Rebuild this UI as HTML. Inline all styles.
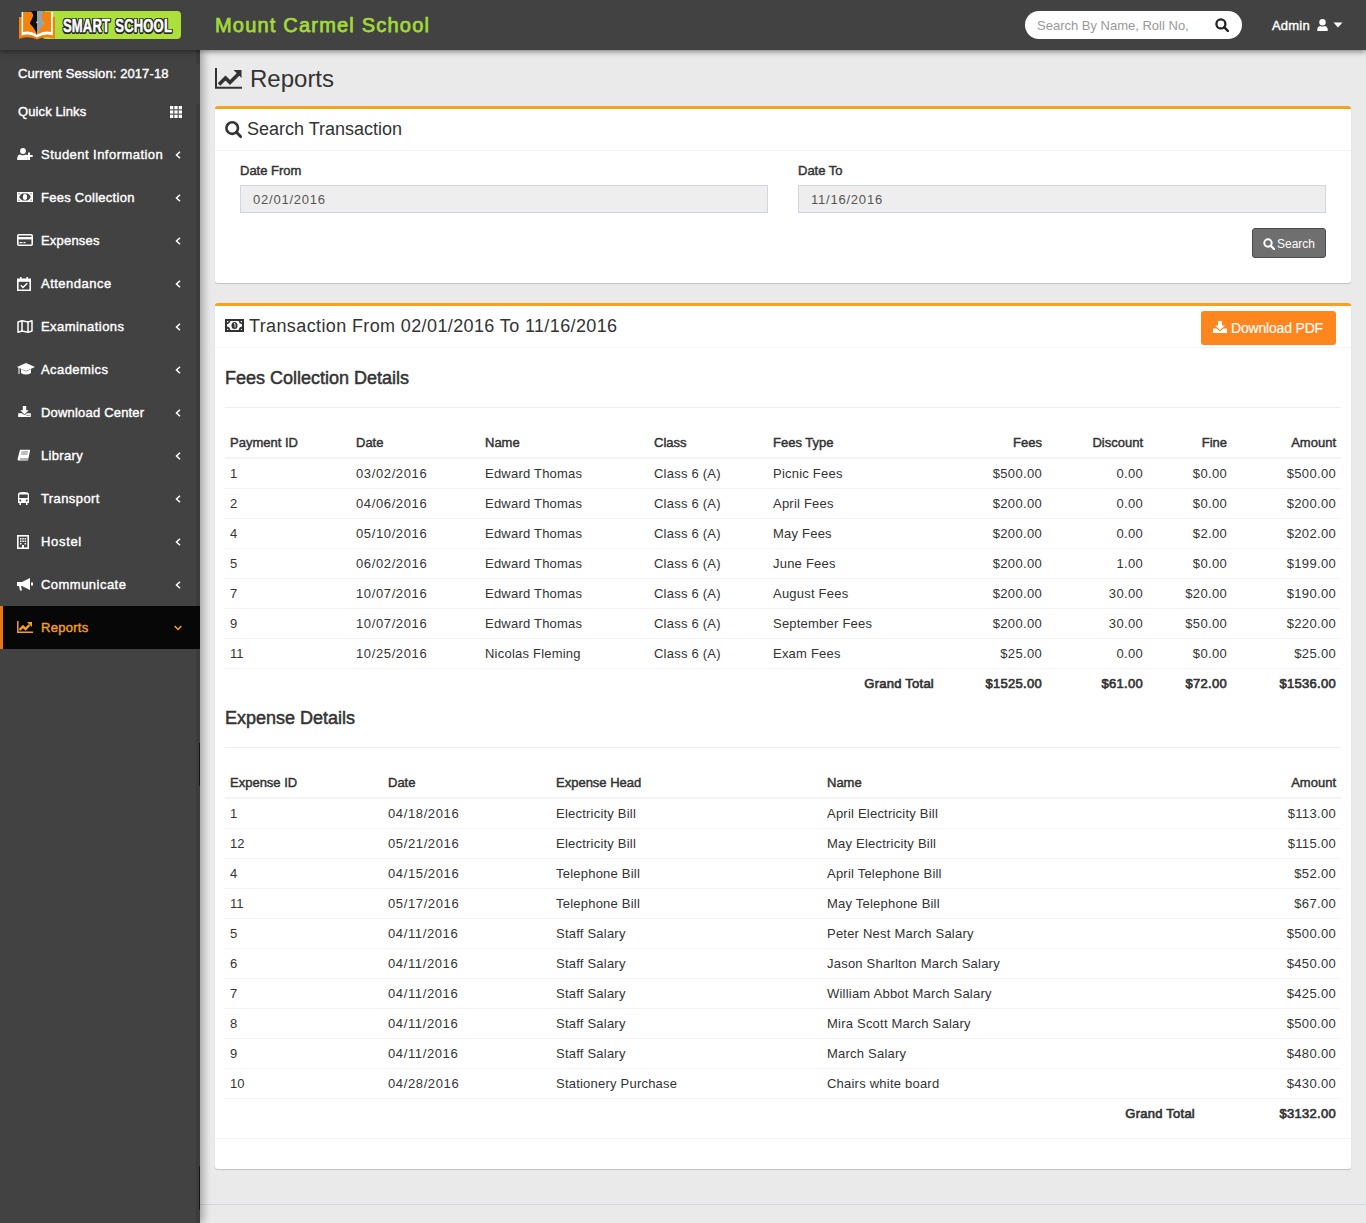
<!DOCTYPE html>
<html><head><meta charset="utf-8">
<style>
*{box-sizing:border-box;margin:0;padding:0}
html,body{width:1366px;height:1223px;overflow:hidden}
body{font-family:"Liberation Sans",sans-serif;background:#eaeaea;color:#333;position:relative}
.abs{position:absolute}
svg{display:block}
/* header */
#hdr{position:absolute;left:0;top:0;width:1366px;height:50px;background:#424242;z-index:5;box-shadow:0 1px 6px rgba(0,0,0,.55)}
#side{position:absolute;left:0;top:50px;width:200px;height:1173px;background:#424242;z-index:4;box-shadow:3px 0 8px rgba(0,0,0,.32)}
#content{position:absolute;left:200px;top:50px;width:1166px;height:1173px;background:#eaeaea}
.txt{position:absolute;white-space:nowrap;line-height:1}
.side-t{color:#fff;font-size:13px;-webkit-text-stroke-width:0.4px;letter-spacing:0.1px}
.mi{position:absolute;left:0;width:200px;height:43px}
.mi .ic{position:absolute;left:17px;top:15px}
.mi .lb{position:absolute;left:41px;top:15px;color:#fff;font-size:13px;letter-spacing:0.27px;-webkit-text-stroke-width:0.4px;line-height:1;white-space:nowrap}
.mi .chev{position:absolute;left:175px;top:18px}
.box{position:absolute;left:215px;width:1136px;background:#fff;border-top:3px solid #f9a11b;border-radius:3px;box-shadow:0 1px 1px rgba(0,0,0,.18)}
.row{position:absolute;left:225px;width:1116px;height:30px;border-bottom:1px solid #f4f4f4}
.row span{position:absolute;top:0;line-height:29px;font-size:13px;white-space:nowrap;color:#333}
.hrow span{font-weight:bold;font-size:12.5px}
.r{text-align:right}
.th{font-size:13px;-webkit-text-stroke-width:0.45px;color:#333;line-height:30px;height:30px;padding-top:1px}
.td{font-size:13px;color:#333;line-height:29px;height:29px}
</style></head><body>

<div id="hdr">
  <!-- logo -->
  <div class="abs" style="left:42px;top:11px;width:139px;height:28px;background:#ade03a;border-radius:4px"></div>
  <svg class="abs" style="left:19px;top:8px" width="37" height="33" viewBox="0 0 37 33">
    <path d="M0 9 H36 V30.7 Q27 27.3 18 31.5 Q9 27.3 0 30.7 Z" fill="#f47f0c"/>
    <path d="M2.6 4 H33.8 V27.6 Q26 24.6 18 29.6 Q10 24.6 2.6 27.6 Z" fill="#fff"/>
    <path d="M12 3 L18 3 L18 27 L10.5 15.5 Z" fill="#0d0d0d"/>
    <path d="M18 3 L24.5 3 L25.5 15.5 L18 27 Z" fill="#93a4ae"/>
    <circle cx="18" cy="14.3" r="0.9" fill="#ddd"/>
    <path d="M4.1 4 H12.7 Q14.6 6.5 13.8 9 Q12.3 12.5 10.5 15.4 Q15.5 19.5 18 26.4 Q11 22.2 4.1 24 Z" fill="#f5820b"/>
    <path d="M32 4 H24.1 Q22.2 6.5 22.8 9 Q23.8 12.5 25.5 15.4 Q21 19.5 18.4 26.4 Q25 22.2 32 24 Z" fill="#f5820b"/>
  </svg>
  <div class="txt" style="left:63px;top:17px;font-size:18px;font-weight:bold;color:#fff;letter-spacing:0.2px;word-spacing:2px;transform:scaleX(0.725);transform-origin:0 0;-webkit-text-stroke:0.5px #fff;text-shadow:1.5px 0px 0 #262626,-1.5px 0px 0 #262626,0px 1.5px 0 #262626,0px -1.5px 0 #262626,1px 1px 0 #262626,-1px -1px 0 #262626,1px -1px 0 #262626,-1px 1px 0 #262626,1.5px 0.8px 0 #262626,-1.5px 0.8px 0 #262626,1.5px -0.8px 0 #262626,-1.5px -0.8px 0 #262626,0.8px 1.5px 0 #262626,-0.8px 1.5px 0 #262626,0.8px -1.5px 0 #262626,-0.8px -1.5px 0 #262626">SMART SCHOOL</div>
  <div class="txt" style="left:215px;top:15px;font-size:20px;color:#a2d93a;letter-spacing:1.2px;-webkit-text-stroke:0.75px #a2d93a">Mount Carmel School</div>
  <!-- search -->
  <div class="abs" style="left:1025px;top:11px;width:217px;height:28px;background:#fff;border-radius:14px"></div>
  <div class="txt" style="left:1037px;top:19px;font-size:13px;color:#999">Search By Name, Roll No,</div>
  <svg class="abs" style="left:1215px;top:18px" width="14" height="14" viewBox="0 0 14 14"><circle cx="5.9" cy="5.9" r="4.5" fill="none" stroke="#222" stroke-width="2.3"/><path d="M9.2 9.2 L12.8 12.8" stroke="#222" stroke-width="2.4" stroke-linecap="round"/></svg>
  <div class="txt" style="left:1272px;top:19px;font-size:13px;-webkit-text-stroke-width:0.4px;letter-spacing:0.2px;color:#fff">Admin</div>
  <svg class="abs" style="left:1317px;top:19px" width="11" height="12" viewBox="0 0 11 12"><circle cx="5.5" cy="3.3" r="3.2" fill="#fff"/><path d="M0.3 12 L0.3 10 Q0.5 7.2 3 6.9 Q5.5 8.3 8 6.9 Q10.5 7.2 10.7 10 L10.7 12 Z" fill="#fff"/></svg>
  <svg class="abs" style="left:1333px;top:22px" width="10" height="6" viewBox="0 0 10 6"><path d="M0.5 0.5 L9.5 0.5 L5 5.5 Z" fill="#fff"/></svg>
</div>

<div id="side">
  <div class="abs" style="left:196px;top:0;width:4px;height:14px;background:#3b3b3b"></div>
  <div class="abs" style="left:196px;top:54px;width:4px;height:1119px;background:#3c3c3c"></div>
  <div class="txt side-t" style="left:18px;top:17px">Current Session: 2017-18</div>
  <div class="txt side-t" style="left:18px;top:55px">Quick Links</div>
  <svg class="abs" style="left:170px;top:56px" width="12" height="12" viewBox="0 0 12 12" fill="#fff"><rect x="0" y="0" width="3.3" height="3.3"/><rect x="4.35" y="0" width="3.3" height="3.3"/><rect x="8.7" y="0" width="3.3" height="3.3"/><rect x="0" y="4.35" width="3.3" height="3.3"/><rect x="4.35" y="4.35" width="3.3" height="3.3"/><rect x="8.7" y="4.35" width="3.3" height="3.3"/><rect x="0" y="8.7" width="3.3" height="3.3"/><rect x="4.35" y="8.7" width="3.3" height="3.3"/><rect x="8.7" y="8.7" width="3.3" height="3.3"/></svg>
  <div class="mi" style="top:83px"><div class="ic" style="top:15px"><svg width="17" height="13" viewBox="0 0 17 13" fill="#fff"><circle cx="6" cy="3" r="2.9"/><path d="M0.2 12 L0.2 10 Q0.5 6.8 3.3 6.4 Q6 8.2 8.7 6.4 Q10 6.6 10.8 7.5 L10.8 12 Z"/><path d="M11 4.5 h2 v2.6 h2.7 v2 h-2.7 v2.8 h-2 v-2.8 h-2.6 v-2 h2.6 z"/></svg></div><div class="lb" style="letter-spacing:0.46px">Student Information</div><svg class="chev" width="6" height="8" viewBox="0 0 6 8"><path d="M5 0.7 L1.5 4 L5 7.3" fill="none" stroke="#fff" stroke-width="1.5"/></svg></div>
  <div class="mi" style="top:126px"><div class="ic" style="top:16px"><svg width="16" height="10" viewBox="0 0 16 10"><rect x="0" y="0" width="16" height="10" fill="#fff"/><path d="M2.2 5 Q3.8 2 5.5 1.6 H10.5 Q12.2 2 13.8 5 Q12.2 8 10.5 8.4 H5.5 Q3.8 8 2.2 5 Z" fill="#424242"/><ellipse cx="8" cy="5" rx="2.2" ry="3" fill="#fff"/><circle cx="2" cy="1.8" r="0.6" fill="#424242"/><circle cx="14" cy="1.8" r="0.6" fill="#424242"/><circle cx="2" cy="8.2" r="0.6" fill="#424242"/><circle cx="14" cy="8.2" r="0.6" fill="#424242"/></svg></div><div class="lb" style="letter-spacing:0.27px">Fees Collection</div><svg class="chev" width="6" height="8" viewBox="0 0 6 8"><path d="M5 0.7 L1.5 4 L5 7.3" fill="none" stroke="#fff" stroke-width="1.5"/></svg></div>
  <div class="mi" style="top:169px"><div class="ic"><svg width="16" height="12" viewBox="0 0 16 12"><rect x="0.8" y="0.8" width="14.4" height="10.4" rx="1" fill="none" stroke="#fff" stroke-width="1.6"/><rect x="0.8" y="3" width="14.4" height="2.4" fill="#fff"/><rect x="2.5" y="8" width="3" height="1.2" fill="#fff"/><rect x="6.5" y="8" width="2" height="1.2" fill="#fff"/></svg></div><div class="lb" style="letter-spacing:0.2px">Expenses</div><svg class="chev" width="6" height="8" viewBox="0 0 6 8"><path d="M5 0.7 L1.5 4 L5 7.3" fill="none" stroke="#fff" stroke-width="1.5"/></svg></div>
  <div class="mi" style="top:212px"><div class="ic"><svg width="14" height="14" viewBox="0 0 14 14"><rect x="0.8" y="2.3" width="12.4" height="11" fill="none" stroke="#fff" stroke-width="1.6"/><rect x="0.8" y="2.3" width="12.4" height="2.5" fill="#fff"/><rect x="3" y="0" width="1.6" height="3" fill="#fff"/><rect x="9.4" y="0" width="1.6" height="3" fill="#fff"/><path d="M3.8 8.3 L6 10.5 L10.3 6.2" fill="none" stroke="#fff" stroke-width="1.4"/></svg></div><div class="lb" style="letter-spacing:0.49px">Attendance</div><svg class="chev" width="6" height="8" viewBox="0 0 6 8"><path d="M5 0.7 L1.5 4 L5 7.3" fill="none" stroke="#fff" stroke-width="1.5"/></svg></div>
  <div class="mi" style="top:255px"><div class="ic"><svg width="16" height="13" viewBox="0 0 16 13"><path d="M1 2 L5 0.8 L11 2 L15 0.8 L15 11 L11 12.2 L5 11 L1 12.2 Z" fill="none" stroke="#fff" stroke-width="1.5" stroke-linejoin="round"/><path d="M5 0.8 V11 M11 2 V12.2" stroke="#fff" stroke-width="1.5"/></svg></div><div class="lb" style="letter-spacing:0.45px">Examinations</div><svg class="chev" width="6" height="8" viewBox="0 0 6 8"><path d="M5 0.7 L1.5 4 L5 7.3" fill="none" stroke="#fff" stroke-width="1.5"/></svg></div>
  <div class="mi" style="top:298px"><div class="ic"><svg width="18" height="12" viewBox="0 0 18 12" fill="#fff"><path d="M0 4 L9 0 L18 4 L9 8 Z"/><path d="M4 6 L4 10 Q9 13 14 10 L14 6 L9 8.5 Z"/><rect x="1.5" y="4" width="1" height="7"/></svg></div><div class="lb" style="letter-spacing:0.43px">Academics</div><svg class="chev" width="6" height="8" viewBox="0 0 6 8"><path d="M5 0.7 L1.5 4 L5 7.3" fill="none" stroke="#fff" stroke-width="1.5"/></svg></div>
  <div class="mi" style="top:341px"><div class="ic"><svg width="13" height="11" viewBox="0 0 15 13" fill="#fff" style="margin-left:0.5px"><path d="M5.5 0 h4 v5 h3 L7.5 10 L2.5 5 h3 z"/><path d="M0 8.5 h4.5 l3 2.5 l3 -2.5 h4.5 v4.5 h-15 z"/><rect x="10" y="10.5" width="1.2" height="1.2" fill="#424242"/><rect x="12.2" y="10.5" width="1.2" height="1.2" fill="#424242"/></svg></div><div class="lb" style="letter-spacing:0.19px">Download Center</div><svg class="chev" width="6" height="8" viewBox="0 0 6 8"><path d="M5 0.7 L1.5 4 L5 7.3" fill="none" stroke="#fff" stroke-width="1.5"/></svg></div>
  <div class="mi" style="top:384px"><div class="ic"><svg width="14" height="13" viewBox="0 0 14 13"><path d="M3 0.8 L13.2 0.8 L11 11.5 L1.2 11.5 Q0.2 11 0.8 9 Z" fill="#fff"/><path d="M3 10 L12 10" stroke="#424242" stroke-width="0.8"/><path d="M4.5 3 L11 3 M4 5 L10.5 5" stroke="#424242" stroke-width="0.7"/></svg></div><div class="lb" style="letter-spacing:0.33px">Library</div><svg class="chev" width="6" height="8" viewBox="0 0 6 8"><path d="M5 0.7 L1.5 4 L5 7.3" fill="none" stroke="#fff" stroke-width="1.5"/></svg></div>
  <div class="mi" style="top:427px"><div class="ic"><svg width="13" height="13" viewBox="0 0 13 13" fill="#fff"><path d="M1 2 Q1 0 6.5 0 Q12 0 12 2 L12 11 L10.5 11 L10.5 13 L9 13 L9 11 L4 11 L4 13 L2.5 13 L2.5 11 L1 11 Z"/><rect x="2.3" y="2.5" width="8.4" height="3.5" fill="#424242"/><circle cx="3.3" cy="8.5" r="1" fill="#424242"/><circle cx="9.7" cy="8.5" r="1" fill="#424242"/></svg></div><div class="lb" style="letter-spacing:0.4px">Transport</div><svg class="chev" width="6" height="8" viewBox="0 0 6 8"><path d="M5 0.7 L1.5 4 L5 7.3" fill="none" stroke="#fff" stroke-width="1.5"/></svg></div>
  <div class="mi" style="top:470px"><div class="ic"><svg width="12" height="14" viewBox="0 0 12 14"><rect x="0.8" y="0.8" width="10.4" height="12.4" fill="none" stroke="#fff" stroke-width="1.6"/><path d="M3 3h1.5v1.5H3zM5.3 3h1.5v1.5H5.3zM7.6 3h1.5v1.5H7.6zM3 5.5h1.5V7H3zM5.3 5.5h1.5V7H5.3zM7.6 5.5h1.5V7H7.6zM3 8h1.5v1.5H3zM7.6 8h1.5v1.5H7.6zM5 10h2v3H5z" fill="#fff"/></svg></div><div class="lb" style="letter-spacing:0.67px">Hostel</div><svg class="chev" width="6" height="8" viewBox="0 0 6 8"><path d="M5 0.7 L1.5 4 L5 7.3" fill="none" stroke="#fff" stroke-width="1.5"/></svg></div>
  <div class="mi" style="top:513px"><div class="ic"><svg width="16" height="13" viewBox="0 0 16 13" fill="#fff"><path d="M0 4 L5 4 L13 0 L13 12 L5 8 L0 8 Z"/><path d="M2 8 L4 8 L5 12.5 L3 12.5 Z"/><rect x="14" y="4.5" width="2" height="3"/></svg></div><div class="lb" style="letter-spacing:0.47px">Communicate</div><svg class="chev" width="6" height="8" viewBox="0 0 6 8"><path d="M5 0.7 L1.5 4 L5 7.3" fill="none" stroke="#fff" stroke-width="1.5"/></svg></div>
  <div class="mi" style="top:556px;background:#070707;border-left:3px solid #e8780f"><div class="ic" style="left:14px;top:15px"><svg width="16" height="12" viewBox="0 0 16 12"><path d="M0.8 0 V11.2 H16" fill="none" stroke="#f5a020" stroke-width="1.5"/><path d="M2.5 9 L6 5.5 L8.5 8 L12.5 4" fill="none" stroke="#f5a020" stroke-width="2.4"/><path d="M10 1 L15 1 L15 6 Z" fill="#f5a020"/></svg></div><div class="lb" style="left:38px;color:#f5a020">Reports</div><svg class="chev" style="left:171px;top:19px" width="8" height="6" viewBox="0 0 8 6"><path d="M0.7 1 L4 4.5 L7.3 1" fill="none" stroke="#f5a020" stroke-width="1.5"/></svg></div>
</div>

<div class="abs" style="left:199px;top:743px;width:1px;height:43px;background:#151515;z-index:6"></div>
<div class="abs" style="left:199px;top:1166px;width:1px;height:44px;background:#151515;z-index:6"></div>
<div id="content">
</div>

<svg class="abs" style="left:215px;top:68px" width="28" height="21" viewBox="0 0 28 21"><path d="M1 0 V19.8 H27" fill="none" stroke="#333" stroke-width="2"/><path d="M4 16.5 L10.5 10 L15 14.5 L23.5 6" fill="none" stroke="#333" stroke-width="3.6"/><path d="M18.5 2 L26.5 2 L26.5 10 Z" fill="#333"/></svg>
<div class="txt" style="left:250px;top:67px;font-size:24px;color:#333">Reports</div>
<div class="box" style="top:106px;height:177px"></div>
<div class="abs" style="left:215px;top:150px;width:1136px;height:1px;background:#f4f4f4"></div>
<svg class="abs" style="left:224px;top:120px" width="19" height="19" viewBox="0 0 19 19"><circle cx="8.2" cy="8.1" r="5.8" fill="none" stroke="#333" stroke-width="2.6"/><path d="M12.4 12.3 L16.6 16.6" stroke="#333" stroke-width="2.9" stroke-linecap="round"/></svg>
<div class="txt" style="left:247px;top:120px;font-size:18px;color:#333">Search Transaction</div>
<div class="txt" style="left:240px;top:164px;font-size:13px;-webkit-text-stroke-width:0.45px;color:#333">Date From</div>
<div class="txt" style="left:798px;top:164px;font-size:13px;-webkit-text-stroke-width:0.45px;color:#333">Date To</div>
<div class="abs" style="left:240px;top:185px;width:528px;height:28px;background:#eee;border:1px solid #d2d6de"></div>
<div class="abs" style="left:798px;top:185px;width:528px;height:28px;background:#eee;border:1px solid #d2d6de"></div>
<div class="txt" style="left:253px;top:193px;font-size:13px;color:#555;letter-spacing:0.78px">02/01/2016</div>
<div class="txt" style="left:811px;top:193px;font-size:13px;color:#555;letter-spacing:0.78px">11/16/2016</div>
<div class="abs" style="left:1252px;top:228px;width:74px;height:30px;background:#6f6f6f;border:1px solid #4a4a4a;border-radius:3px"></div>
<svg class="abs" style="left:1263px;top:238px" width="12" height="12" viewBox="0 0 12 12"><circle cx="5" cy="5" r="3.7" fill="none" stroke="#fff" stroke-width="2"/><path d="M7.6 7.6 L11 11" stroke="#fff" stroke-width="2.2" stroke-linecap="round"/></svg>
<div class="txt" style="left:1277px;top:238px;font-size:12px;color:#fff">Search</div>
<div class="box" style="top:303px;height:866px"></div>
<div class="abs" style="left:215px;top:347px;width:1136px;height:1px;background:#f4f4f4"></div>
<svg class="abs" style="left:225px;top:319px" width="19" height="13" viewBox="0 0 19 13"><rect x="1" y="1" width="17" height="11" fill="none" stroke="#333" stroke-width="2"/><path d="M1 4.5 Q4.5 4.5 4.5 1 M14.5 1 Q14.5 4.5 18 4.5 M1 8.5 Q4.5 8.5 4.5 12 M14.5 12 Q14.5 8.5 18 8.5" stroke="#333" stroke-width="1.8" fill="none"/><ellipse cx="9.5" cy="6.5" rx="3" ry="3.6" fill="#333"/><path d="M9 4.8 L10 4.5 L10 8.5" stroke="#fff" stroke-width="0.9" fill="none"/></svg>
<div class="txt" style="left:249px;top:317px;font-size:18px;color:#333;letter-spacing:0.38px">Transaction From 02/01/2016 To 11/16/2016</div>
<div class="abs" style="left:1201px;top:311px;width:135px;height:34px;background:#ff851e;border-radius:3px"></div>
<svg class="abs" style="left:1213px;top:321px" width="14" height="12" viewBox="0 0 14 12" fill="#fff"><path d="M5 0 h4 v4.5 h3 L7 9 L2 4.5 h3 z"/><path d="M0 7.5 h3.5 l3.5 3 l3.5 -3 h3.5 v4.5 h-14 z"/></svg>
<div class="txt" style="left:1231px;top:321px;font-size:14px;letter-spacing:-0.18px;color:#fff;-webkit-text-stroke-width:0.15px">Download PDF</div>
<div class="txt" style="left:225px;top:369px;font-size:18px;-webkit-text-stroke-width:0.5px;color:#333">Fees Collection Details</div>
<div class="abs" style="left:225px;top:407px;width:1116px;height:1px;background:#eee"></div>
<div class="abs" style="left:225px;top:457px;width:1116px;height:2px;background:#f4f4f4"></div>
<div class="txt th" style="left:230px;top:427px">Payment ID</div>
<div class="txt th" style="left:356px;top:427px">Date</div>
<div class="txt th" style="left:485px;top:427px">Name</div>
<div class="txt th" style="left:654px;top:427px">Class</div>
<div class="txt th" style="left:773px;top:427px">Fees Type</div>
<div class="txt th r" style="left:842px;width:200px;top:427px">Fees</div>
<div class="txt th r" style="left:943px;width:200px;top:427px">Discount</div>
<div class="txt th r" style="left:1027px;width:200px;top:427px">Fine</div>
<div class="txt th r" style="left:1136px;width:200px;top:427px">Amount</div>
<div class="txt td" style="left:230px;top:459px">1</div>
<div class="txt td" style="left:356px;top:459px;letter-spacing:0.62px">03/02/2016</div>
<div class="txt td" style="left:485px;top:459px;letter-spacing:0.22px">Edward Thomas</div>
<div class="txt td" style="left:654px;top:459px;letter-spacing:0.22px">Class 6 (A)</div>
<div class="txt td" style="left:773px;top:459px;letter-spacing:0.22px">Picnic Fees</div>
<div class="txt td r" style="left:842px;width:200px;top:459px;letter-spacing:0.32px">$500.00</div>
<div class="txt td r" style="left:943px;width:200px;top:459px;letter-spacing:0.32px">0.00</div>
<div class="txt td r" style="left:1027px;width:200px;top:459px;letter-spacing:0.32px">$0.00</div>
<div class="txt td r" style="left:1136px;width:200px;top:459px;letter-spacing:0.32px">$500.00</div>
<div class="abs" style="left:225px;top:488px;width:1116px;height:1px;background:#f4f4f4"></div>
<div class="txt td" style="left:230px;top:489px">2</div>
<div class="txt td" style="left:356px;top:489px;letter-spacing:0.62px">04/06/2016</div>
<div class="txt td" style="left:485px;top:489px;letter-spacing:0.22px">Edward Thomas</div>
<div class="txt td" style="left:654px;top:489px;letter-spacing:0.22px">Class 6 (A)</div>
<div class="txt td" style="left:773px;top:489px;letter-spacing:0.22px">April Fees</div>
<div class="txt td r" style="left:842px;width:200px;top:489px;letter-spacing:0.32px">$200.00</div>
<div class="txt td r" style="left:943px;width:200px;top:489px;letter-spacing:0.32px">0.00</div>
<div class="txt td r" style="left:1027px;width:200px;top:489px;letter-spacing:0.32px">$0.00</div>
<div class="txt td r" style="left:1136px;width:200px;top:489px;letter-spacing:0.32px">$200.00</div>
<div class="abs" style="left:225px;top:518px;width:1116px;height:1px;background:#f4f4f4"></div>
<div class="txt td" style="left:230px;top:519px">4</div>
<div class="txt td" style="left:356px;top:519px;letter-spacing:0.62px">05/10/2016</div>
<div class="txt td" style="left:485px;top:519px;letter-spacing:0.22px">Edward Thomas</div>
<div class="txt td" style="left:654px;top:519px;letter-spacing:0.22px">Class 6 (A)</div>
<div class="txt td" style="left:773px;top:519px;letter-spacing:0.22px">May Fees</div>
<div class="txt td r" style="left:842px;width:200px;top:519px;letter-spacing:0.32px">$200.00</div>
<div class="txt td r" style="left:943px;width:200px;top:519px;letter-spacing:0.32px">0.00</div>
<div class="txt td r" style="left:1027px;width:200px;top:519px;letter-spacing:0.32px">$2.00</div>
<div class="txt td r" style="left:1136px;width:200px;top:519px;letter-spacing:0.32px">$202.00</div>
<div class="abs" style="left:225px;top:548px;width:1116px;height:1px;background:#f4f4f4"></div>
<div class="txt td" style="left:230px;top:549px">5</div>
<div class="txt td" style="left:356px;top:549px;letter-spacing:0.62px">06/02/2016</div>
<div class="txt td" style="left:485px;top:549px;letter-spacing:0.22px">Edward Thomas</div>
<div class="txt td" style="left:654px;top:549px;letter-spacing:0.22px">Class 6 (A)</div>
<div class="txt td" style="left:773px;top:549px;letter-spacing:0.22px">June Fees</div>
<div class="txt td r" style="left:842px;width:200px;top:549px;letter-spacing:0.32px">$200.00</div>
<div class="txt td r" style="left:943px;width:200px;top:549px;letter-spacing:0.32px">1.00</div>
<div class="txt td r" style="left:1027px;width:200px;top:549px;letter-spacing:0.32px">$0.00</div>
<div class="txt td r" style="left:1136px;width:200px;top:549px;letter-spacing:0.32px">$199.00</div>
<div class="abs" style="left:225px;top:578px;width:1116px;height:1px;background:#f4f4f4"></div>
<div class="txt td" style="left:230px;top:579px">7</div>
<div class="txt td" style="left:356px;top:579px;letter-spacing:0.62px">10/07/2016</div>
<div class="txt td" style="left:485px;top:579px;letter-spacing:0.22px">Edward Thomas</div>
<div class="txt td" style="left:654px;top:579px;letter-spacing:0.22px">Class 6 (A)</div>
<div class="txt td" style="left:773px;top:579px;letter-spacing:0.22px">August Fees</div>
<div class="txt td r" style="left:842px;width:200px;top:579px;letter-spacing:0.32px">$200.00</div>
<div class="txt td r" style="left:943px;width:200px;top:579px;letter-spacing:0.32px">30.00</div>
<div class="txt td r" style="left:1027px;width:200px;top:579px;letter-spacing:0.32px">$20.00</div>
<div class="txt td r" style="left:1136px;width:200px;top:579px;letter-spacing:0.32px">$190.00</div>
<div class="abs" style="left:225px;top:608px;width:1116px;height:1px;background:#f4f4f4"></div>
<div class="txt td" style="left:230px;top:609px">9</div>
<div class="txt td" style="left:356px;top:609px;letter-spacing:0.62px">10/07/2016</div>
<div class="txt td" style="left:485px;top:609px;letter-spacing:0.22px">Edward Thomas</div>
<div class="txt td" style="left:654px;top:609px;letter-spacing:0.22px">Class 6 (A)</div>
<div class="txt td" style="left:773px;top:609px;letter-spacing:0.22px">September Fees</div>
<div class="txt td r" style="left:842px;width:200px;top:609px;letter-spacing:0.32px">$200.00</div>
<div class="txt td r" style="left:943px;width:200px;top:609px;letter-spacing:0.32px">30.00</div>
<div class="txt td r" style="left:1027px;width:200px;top:609px;letter-spacing:0.32px">$50.00</div>
<div class="txt td r" style="left:1136px;width:200px;top:609px;letter-spacing:0.32px">$220.00</div>
<div class="abs" style="left:225px;top:638px;width:1116px;height:1px;background:#f4f4f4"></div>
<div class="txt td" style="left:230px;top:639px">11</div>
<div class="txt td" style="left:356px;top:639px;letter-spacing:0.62px">10/25/2016</div>
<div class="txt td" style="left:485px;top:639px;letter-spacing:0.22px">Nicolas Fleming</div>
<div class="txt td" style="left:654px;top:639px;letter-spacing:0.22px">Class 6 (A)</div>
<div class="txt td" style="left:773px;top:639px;letter-spacing:0.22px">Exam Fees</div>
<div class="txt td r" style="left:842px;width:200px;top:639px;letter-spacing:0.32px">$25.00</div>
<div class="txt td r" style="left:943px;width:200px;top:639px;letter-spacing:0.32px">0.00</div>
<div class="txt td r" style="left:1027px;width:200px;top:639px;letter-spacing:0.32px">$0.00</div>
<div class="txt td r" style="left:1136px;width:200px;top:639px;letter-spacing:0.32px">$25.00</div>
<div class="abs" style="left:225px;top:668px;width:1116px;height:1px;background:#f4f4f4"></div>
<div class="txt th r" style="left:734px;width:200px;top:668px;letter-spacing:0.25px;-webkit-text-stroke-width:0.65px">Grand Total</div>
<div class="txt th r" style="left:842px;width:200px;top:668px;letter-spacing:0.3px;-webkit-text-stroke-width:0.65px">$1525.00</div>
<div class="txt th r" style="left:943px;width:200px;top:668px;letter-spacing:0.3px;-webkit-text-stroke-width:0.65px">$61.00</div>
<div class="txt th r" style="left:1027px;width:200px;top:668px;letter-spacing:0.3px;-webkit-text-stroke-width:0.65px">$72.00</div>
<div class="txt th r" style="left:1136px;width:200px;top:668px;letter-spacing:0.3px;-webkit-text-stroke-width:0.65px">$1536.00</div>
<div class="txt" style="left:225px;top:709px;font-size:18px;-webkit-text-stroke-width:0.5px;color:#333">Expense Details</div>
<div class="abs" style="left:225px;top:747px;width:1116px;height:1px;background:#eee"></div>
<div class="abs" style="left:225px;top:797px;width:1116px;height:2px;background:#f4f4f4"></div>
<div class="txt th" style="left:230px;top:767px">Expense ID</div>
<div class="txt th" style="left:388px;top:767px">Date</div>
<div class="txt th" style="left:556px;top:767px">Expense Head</div>
<div class="txt th" style="left:827px;top:767px">Name</div>
<div class="txt th r" style="left:1136px;width:200px;top:767px">Amount</div>
<div class="txt td" style="left:230px;top:799px">1</div>
<div class="txt td" style="left:388px;top:799px;letter-spacing:0.62px">04/18/2016</div>
<div class="txt td" style="left:556px;top:799px;letter-spacing:0.22px">Electricity Bill</div>
<div class="txt td" style="left:827px;top:799px;letter-spacing:0.22px">April Electricity Bill</div>
<div class="txt td r" style="left:1136px;width:200px;top:799px;letter-spacing:0.32px">$113.00</div>
<div class="abs" style="left:225px;top:828px;width:1116px;height:1px;background:#f4f4f4"></div>
<div class="txt td" style="left:230px;top:829px">12</div>
<div class="txt td" style="left:388px;top:829px;letter-spacing:0.62px">05/21/2016</div>
<div class="txt td" style="left:556px;top:829px;letter-spacing:0.22px">Electricity Bill</div>
<div class="txt td" style="left:827px;top:829px;letter-spacing:0.22px">May Electricity Bill</div>
<div class="txt td r" style="left:1136px;width:200px;top:829px;letter-spacing:0.32px">$115.00</div>
<div class="abs" style="left:225px;top:858px;width:1116px;height:1px;background:#f4f4f4"></div>
<div class="txt td" style="left:230px;top:859px">4</div>
<div class="txt td" style="left:388px;top:859px;letter-spacing:0.62px">04/15/2016</div>
<div class="txt td" style="left:556px;top:859px;letter-spacing:0.22px">Telephone Bill</div>
<div class="txt td" style="left:827px;top:859px;letter-spacing:0.22px">April Telephone Bill</div>
<div class="txt td r" style="left:1136px;width:200px;top:859px;letter-spacing:0.32px">$52.00</div>
<div class="abs" style="left:225px;top:888px;width:1116px;height:1px;background:#f4f4f4"></div>
<div class="txt td" style="left:230px;top:889px">11</div>
<div class="txt td" style="left:388px;top:889px;letter-spacing:0.62px">05/17/2016</div>
<div class="txt td" style="left:556px;top:889px;letter-spacing:0.22px">Telephone Bill</div>
<div class="txt td" style="left:827px;top:889px;letter-spacing:0.22px">May Telephone Bill</div>
<div class="txt td r" style="left:1136px;width:200px;top:889px;letter-spacing:0.32px">$67.00</div>
<div class="abs" style="left:225px;top:918px;width:1116px;height:1px;background:#f4f4f4"></div>
<div class="txt td" style="left:230px;top:919px">5</div>
<div class="txt td" style="left:388px;top:919px;letter-spacing:0.62px">04/11/2016</div>
<div class="txt td" style="left:556px;top:919px;letter-spacing:0.22px">Staff Salary</div>
<div class="txt td" style="left:827px;top:919px;letter-spacing:0.22px">Peter Nest March Salary</div>
<div class="txt td r" style="left:1136px;width:200px;top:919px;letter-spacing:0.32px">$500.00</div>
<div class="abs" style="left:225px;top:948px;width:1116px;height:1px;background:#f4f4f4"></div>
<div class="txt td" style="left:230px;top:949px">6</div>
<div class="txt td" style="left:388px;top:949px;letter-spacing:0.62px">04/11/2016</div>
<div class="txt td" style="left:556px;top:949px;letter-spacing:0.22px">Staff Salary</div>
<div class="txt td" style="left:827px;top:949px;letter-spacing:0.22px">Jason Sharlton March Salary</div>
<div class="txt td r" style="left:1136px;width:200px;top:949px;letter-spacing:0.32px">$450.00</div>
<div class="abs" style="left:225px;top:978px;width:1116px;height:1px;background:#f4f4f4"></div>
<div class="txt td" style="left:230px;top:979px">7</div>
<div class="txt td" style="left:388px;top:979px;letter-spacing:0.62px">04/11/2016</div>
<div class="txt td" style="left:556px;top:979px;letter-spacing:0.22px">Staff Salary</div>
<div class="txt td" style="left:827px;top:979px;letter-spacing:0.22px">William Abbot March Salary</div>
<div class="txt td r" style="left:1136px;width:200px;top:979px;letter-spacing:0.32px">$425.00</div>
<div class="abs" style="left:225px;top:1008px;width:1116px;height:1px;background:#f4f4f4"></div>
<div class="txt td" style="left:230px;top:1009px">8</div>
<div class="txt td" style="left:388px;top:1009px;letter-spacing:0.62px">04/11/2016</div>
<div class="txt td" style="left:556px;top:1009px;letter-spacing:0.22px">Staff Salary</div>
<div class="txt td" style="left:827px;top:1009px;letter-spacing:0.22px">Mira Scott March Salary</div>
<div class="txt td r" style="left:1136px;width:200px;top:1009px;letter-spacing:0.32px">$500.00</div>
<div class="abs" style="left:225px;top:1038px;width:1116px;height:1px;background:#f4f4f4"></div>
<div class="txt td" style="left:230px;top:1039px">9</div>
<div class="txt td" style="left:388px;top:1039px;letter-spacing:0.62px">04/11/2016</div>
<div class="txt td" style="left:556px;top:1039px;letter-spacing:0.22px">Staff Salary</div>
<div class="txt td" style="left:827px;top:1039px;letter-spacing:0.22px">March Salary</div>
<div class="txt td r" style="left:1136px;width:200px;top:1039px;letter-spacing:0.32px">$480.00</div>
<div class="abs" style="left:225px;top:1068px;width:1116px;height:1px;background:#f4f4f4"></div>
<div class="txt td" style="left:230px;top:1069px">10</div>
<div class="txt td" style="left:388px;top:1069px;letter-spacing:0.62px">04/28/2016</div>
<div class="txt td" style="left:556px;top:1069px;letter-spacing:0.22px">Stationery Purchase</div>
<div class="txt td" style="left:827px;top:1069px;letter-spacing:0.22px">Chairs white board</div>
<div class="txt td r" style="left:1136px;width:200px;top:1069px;letter-spacing:0.32px">$430.00</div>
<div class="abs" style="left:225px;top:1098px;width:1116px;height:1px;background:#f4f4f4"></div>
<div class="txt th r" style="left:995px;width:200px;top:1098px;letter-spacing:0.25px;-webkit-text-stroke-width:0.65px">Grand Total</div>
<div class="txt th r" style="left:1136px;width:200px;top:1098px;letter-spacing:0.3px;-webkit-text-stroke-width:0.65px">$3132.00</div>
<div class="abs" style="left:215px;top:1138px;width:1136px;height:1px;background:#f4f4f4"></div>
<div class="abs" style="left:200px;top:1204px;width:1166px;height:1px;background:#d2d6de"></div>

</body></html>
